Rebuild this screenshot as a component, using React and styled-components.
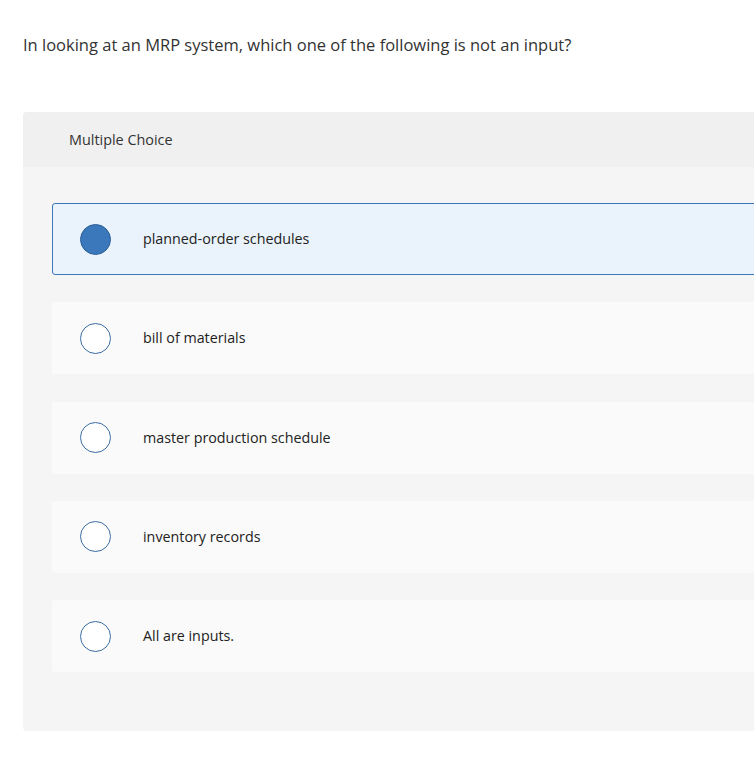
import React from "react";
import styled, { createGlobalStyle } from "styled-components";

const GlobalStyle = createGlobalStyle`
  html, body {
    margin: 0;
    padding: 0;
    background: #fff;
    overflow-x: hidden;
  }
  body {
    font-family: "Open Sans", "Liberation Sans", sans-serif;
    color: #333;
  }
`;

const Page = styled.div`
  padding: 33px 0 0 23px;
  width: 820px;
`;

const Question = styled.p`
  margin: 0 0 55px;
  font-size: 16.5px;
  line-height: 24px;
  color: #333;
`;

const Panel = styled.section`
  background: #f5f5f5;
  border-radius: 4px 0 0 4px;
  padding-bottom: 59px;
`;

const PanelHeader = styled.header`
  height: 55px;
  background: #f0f0f0;
  display: flex;
  align-items: center;
  padding-left: 46px;
  font-size: 14.4px;
  color: #333;
  border-radius: 4px 0 0 0;
`;

const Options = styled.div`
  display: flex;
  flex-direction: column;
  gap: 27.3px;
  padding: 36px 0 0 29px;
`;

const Option = styled.label`
  height: 72px;
  box-sizing: border-box;
  display: flex;
  align-items: center;
  padding-left: 27px;
  border-radius: 3px;
  background: ${(p) => (p.$selected ? "#eaf2fb" : "#fafafa")};
  border: 1px solid ${(p) => (p.$selected ? "#3a78bd" : "transparent")};
  cursor: pointer;
`;

const Radio = styled.span`
  width: 31px;
  height: 31px;
  box-sizing: border-box;
  border-radius: 50%;
  flex: none;
  background: ${(p) => (p.$selected ? "#3a78bb" : "#fff")};
  border: ${(p) => (p.$selected ? "1px solid #2c5f96" : "1.5px solid #3b6ea4")};
`;

const OptionText = styled.span`
  margin-left: 32px;
  margin-top: -1px;
  font-size: 14.3px;
  color: #222;
`;

const choices = [
  "planned-order schedules",
  "bill of materials",
  "master production schedule",
  "inventory records",
  "All are inputs.",
];

export default function App() {
  return (
    <>
      <GlobalStyle />
      <Page>
        <Question>
          In looking at an MRP system, which one of the following is not an input?
        </Question>
        <Panel>
          <PanelHeader>Multiple Choice</PanelHeader>
          <Options>
            {choices.map((c, i) => (
              <Option key={c} $selected={i === 0}>
                <Radio $selected={i === 0} />
                <OptionText>{c}</OptionText>
              </Option>
            ))}
          </Options>
        </Panel>
      </Page>
    </>
  );
}
